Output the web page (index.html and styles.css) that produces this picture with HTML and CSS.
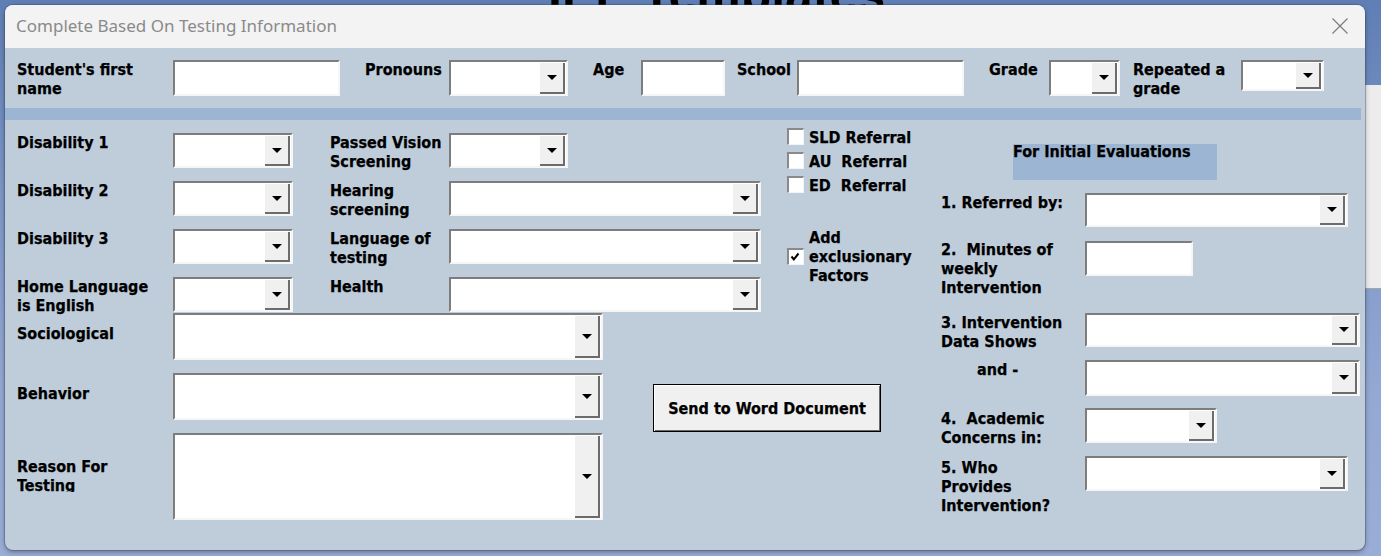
FILE: index.html
```html
<!DOCTYPE html>
<html lang="en">
<head>
<meta charset="utf-8">
<title>Complete Based On Testing Information</title>
<link rel="stylesheet" href="styles.css">
</head>
<body>
<div class="desk">
  <h1 class="doc-title">IEP Templates</h1>
  <div class="doc-panel"></div>
</div>

<div class="dialog">
  <div class="titlebar">
    <span class="title">Complete Based On Testing Information</span>
    <svg class="close" viewBox="0 0 16 16" width="16" height="16"><path d="M0.5 0.5L15.5 15.5M15.5 0.5L0.5 15.5"/></svg>
  </div>

  <div class="form">
    <div class="toprow">
      <div class="lbl w156">Student's first<br>name</div>
      <div class="tb w167 h36"></div>
      <div class="lbl w84 ml25">Pronouns</div>
      <div class="combo w119 h36"><span class="dd"><i class="arrow"></i></span></div>
      <div class="lbl w48 ml25">Age</div>
      <div class="tb w84 h36"></div>
      <div class="lbl w60 ml12">School</div>
      <div class="tb w167 h36"></div>
      <div class="lbl w60 ml25">Grade</div>
      <div class="combo w71 h36"><span class="dd"><i class="arrow"></i></span></div>
      <div class="lbl w108 ml13">Repeated a<br>grade</div>
      <div class="combo w83 h31"><span class="dd"><i class="arrow"></i></span></div>
    </div>

    <div class="sep"></div>

    <div class="main">
      <div class="leftblock">
        <div class="upper">
          <div class="grid4">
            <div class="row">
              <div class="lbl w156">Disability 1</div>
              <div class="combo w120 h35"><span class="dd"><i class="arrow"></i></span></div>
              <div class="lbl w119 ml37">Passed Vision<br>Screening</div>
              <div class="combo w119 h35"><span class="dd"><i class="arrow"></i></span></div>
            </div>
            <div class="row">
              <div class="lbl w156">Disability 2</div>
              <div class="combo w120 h35"><span class="dd"><i class="arrow"></i></span></div>
              <div class="lbl w119 ml37">Hearing<br>screening</div>
              <div class="combo w312 h35"><span class="dd"><i class="arrow"></i></span></div>
            </div>
            <div class="row">
              <div class="lbl w156">Disability 3</div>
              <div class="combo w120 h35"><span class="dd"><i class="arrow"></i></span></div>
              <div class="lbl w119 ml37">Language of<br>testing</div>
              <div class="combo w312 h35"><span class="dd"><i class="arrow"></i></span></div>
            </div>
            <div class="row">
              <div class="lbl w156">Home Language<br>is English</div>
              <div class="combo w120 h35"><span class="dd"><i class="arrow"></i></span></div>
              <div class="lbl w119 ml37">Health</div>
              <div class="combo w312 h35"><span class="dd"><i class="arrow"></i></span></div>
            </div>
          </div>

          <div class="checks">
            <div class="chk"><span class="box"></span><span>SLD Referral</span></div>
            <div class="chk"><span class="box"></span><span>AU&nbsp; Referral</span></div>
            <div class="chk"><span class="box"></span><span>ED&nbsp; Referral</span></div>
            <div class="chk add"><span class="box"><svg class="tick" viewBox="0 0 13 13" width="13" height="13"><path d="M1.5 5.5L3.8 8.3L8.5 2.5"/></svg></span><span>Add<br>exclusionary<br>Factors</span></div>
          </div>
        </div>

        <div class="lower">
          <div class="widecol">
            <div class="wrow">
              <div class="lbl w156">Sociological</div>
              <div class="combo w430 h47"><span class="dd"><i class="arrow"></i></span></div>
            </div>
            <div class="wrow mt13">
              <div class="lbl w156">Behavior</div>
              <div class="combo w430 h47"><span class="dd"><i class="arrow"></i></span></div>
            </div>
            <div class="wrow mt13">
              <div class="lbl w156 clip">Reason For<br>Testing</div>
              <div class="combo w430 h87"><span class="dd"><i class="arrow"></i></span></div>
            </div>
          </div>
          <button class="sendbtn" type="button">Send to Word Document</button>
        </div>
      </div>

      <div class="rightcol">
        <div class="evalhead">For Initial Evaluations</div>
        <div class="rrow r1">
          <div class="lbl">1. Referred by:</div>
          <div class="combo w263 h34"><span class="dd"><i class="arrow"></i></span></div>
        </div>
        <div class="rrow r2">
          <div class="lbl">2.&nbsp; Minutes of<br>weekly<br>Intervention</div>
          <div class="tb w108 h35"></div>
        </div>
        <div class="rrow r3">
          <div class="lbl">3. Intervention<br>Data Shows</div>
          <div class="combo w275 h34"><span class="dd"><i class="arrow"></i></span></div>
        </div>
        <div class="rrow r4">
          <div class="lbl">and -</div>
          <div class="combo w275 h36"><span class="dd"><i class="arrow"></i></span></div>
        </div>
        <div class="rrow r5">
          <div class="lbl">4.&nbsp; Academic<br>Concerns in:</div>
          <div class="combo w132 h35"><span class="dd"><i class="arrow"></i></span></div>
        </div>
        <div class="rrow r6">
          <div class="lbl">5. Who<br>Provides<br>Intervention?</div>
          <div class="combo w263 h35"><span class="dd"><i class="arrow"></i></span></div>
        </div>
      </div>
    </div>
  </div>
</div>
</body>
</html>
```

FILE: styles.css
```css
* { box-sizing: border-box; }

html, body { margin: 0; padding: 0; }

body {
  width: 1381px;
  height: 556px;
  overflow: hidden;
  position: relative;
  background: linear-gradient(180deg, #5f7eb5 0%, #7d97c7 35%, #93a8d3 70%, #9aadd6 100%);
}

/* page behind the dialog */
.desk { height: 100%; }
.doc-title {
  margin: -30px 0 0 548px;
  font: bold 50px/50px "Liberation Sans", Arial, sans-serif;
  color: #000;
  white-space: nowrap;
}
.doc-panel {
  margin: 65px 0 0 1000px;
  height: 204px;
  background: #ececec;
  border-bottom: 1px solid #a6a6a6;
}

/* dialog window (modal overlay) */
.dialog {
  position: absolute;
  left: 5px;
  top: 5px;
  width: 1360px;
  height: 545px;
  border-radius: 8px;
  overflow: hidden;
  background: #bfcddb;
  box-shadow: 0 0 0 1px rgba(60, 70, 95, 0.35), 0 2px 5px rgba(0, 0, 0, 0.35);
  display: flex;
  flex-direction: column;
}

.titlebar {
  flex: none;
  height: 43px;
  background: #f3f3f3;
  display: flex;
  align-items: center;
  padding: 0 17px 0 11px;
}
.title {
  font: 17px/20px "Noto Sans", "Open Sans", sans-serif;
  color: #8a8a8a;
  margin-top: -2px;
}
.close {
  margin-left: auto;
  margin-top: -2px;
  fill: none;
  stroke: #7b7b7b;
  stroke-width: 1.2;
}

.form {
  flex: 1;
  padding: 12px 0 0 12px;
  font-family: "DejaVu Sans Condensed", "DejaVu Sans", sans-serif;
  font-stretch: semi-condensed;
  font-weight: bold;
  font-size: 16px;
  line-height: 19px;
  color: #000;
  -webkit-text-stroke: 0.25px #000;
}

.lbl { flex: none; white-space: nowrap; }

/* controls */
.tb {
  flex: none;
  background: #fff;
  border-style: solid;
  border-width: 2px;
  border-color: #7d7d7d #f6f6f6 #f6f6f6 #7d7d7d;
}
.combo {
  flex: none;
  display: flex;
  justify-content: flex-end;
  background: #fff;
  border-style: solid;
  border-width: 2px;
  border-color: #7d7d7d #f6f6f6 #f6f6f6 #7d7d7d;
  padding: 1px 1px 0 0;
}
.dd {
  width: 25px;
  background: #f0f0f0;
  border-right: 2px solid #6c6c6c;
  border-bottom: 2px solid #6c6c6c;
  display: flex;
  align-items: center;
  justify-content: center;
}
.arrow {
  width: 0;
  height: 0;
  border-left: 5px solid transparent;
  border-right: 5px solid transparent;
  border-top: 5px solid #000;
}

/* sizes */
.w48 { width: 48px; }
.w60 { width: 60px; }
.w71 { width: 71px; }
.w83 { width: 83px; }
.w84 { width: 84px; }
.w108 { width: 108px; }
.w119 { width: 119px; }
.w120 { width: 120px; }
.w132 { width: 132px; }
.w156 { width: 156px; }
.w167 { width: 167px; }
.w263 { width: 263px; }
.w275 { width: 275px; }
.w312 { width: 312px; }
.w430 { width: 430px; }
.h31 { height: 31px; }
.h34 { height: 34px; }
.h35 { height: 35px; }
.h36 { height: 36px; }
.h47 { height: 47px; }
.h87 { height: 87px; }
.ml12 { margin-left: 12px; }
.ml13 { margin-left: 13px; }
.ml25 { margin-left: 25px; }
.ml37 { margin-left: 37px; }
.mt13 { margin-top: 13px; }

/* top row */
.toprow {
  display: flex;
  align-items: flex-start;
  height: 36px;
}

.sep {
  width: 1356px;
  height: 12px;
  margin: 12px 0 0 -12px;
  background: #9cb5d2;
}

.main {
  display: flex;
  align-items: flex-start;
}
.leftblock {
  width: 924px;
  flex: none;
}
.upper {
  display: flex;
  align-items: flex-start;
}
.grid4 {
  width: 744px;
  margin-top: 13px;
  display: flex;
  flex-direction: column;
  gap: 13px;
}
.row {
  display: flex;
  align-items: flex-start;
  height: 35px;
}

/* checkboxes */
.checks {
  margin: 8px 0 0 26px;
  display: flex;
  flex-direction: column;
}
.chk {
  display: flex;
  align-items: flex-start;
  gap: 5px;
  height: 24px;
  white-space: nowrap;
}
.chk.add {
  height: auto;
  margin-top: 28px;
  align-items: center;
}
.box {
  flex: none;
  width: 17px;
  height: 17px;
  background: #fff;
  border-style: solid;
  border-width: 2px 1px 1px 2px;
  border-color: #8a8a8a #f4f4f4 #f4f4f4 #8a8a8a;
  display: flex;
  align-items: center;
  justify-content: center;
}
.tick {
  fill: none;
  stroke: #000;
  stroke-width: 2;
}

/* lower left */
.lower {
  display: flex;
  align-items: flex-start;
  margin-top: 1px;
}
.widecol {
  display: flex;
  flex-direction: column;
}
.wrow {
  display: flex;
  align-items: flex-start;
}
.wrow .lbl { margin-top: 11px; }
.wrow .lbl.clip {
  margin-top: 24px;
  height: 35px;
  overflow: hidden;
}

.sendbtn {
  flex: none;
  margin: 71px 0 0 50px;
  width: 228px;
  height: 48px;
  padding: 0;
  background: #f0f0f0;
  border: 1px solid #000;
  box-shadow: inset 1px 1px 0 #ffffff, inset -1px -1px 0 #6a6a6a;
  font: inherit;
  color: #000;
  text-align: center;
}

/* right column */
.rightcol {
  width: 420px;
  flex: none;
  display: flex;
  flex-direction: column;
  align-items: flex-start;
}
.evalhead {
  margin: 24px 0 0 72px;
  width: 204px;
  height: 36px;
  background: #9cb5d2;
  line-height: 16px;
  white-space: nowrap;
}
.rrow {
  display: flex;
  align-items: flex-start;
}
.rrow .lbl { width: 144px; }
.r1 { margin-top: 13px; height: 34px; }
.r2 { margin-top: 14px; height: 35px; }
.r2 .lbl { margin-top: -1px; }
.r3 { margin-top: 37px; height: 34px; }
.r4 { margin-top: 13px; height: 36px; }
.r4 .lbl { padding-left: 36px; }
.r5 { margin-top: 12px; height: 35px; }
.r5 .lbl { margin-top: 1px; }
.r6 { margin-top: 13px; height: 35px; }
.r6 .lbl { margin-top: 2px; }
```
